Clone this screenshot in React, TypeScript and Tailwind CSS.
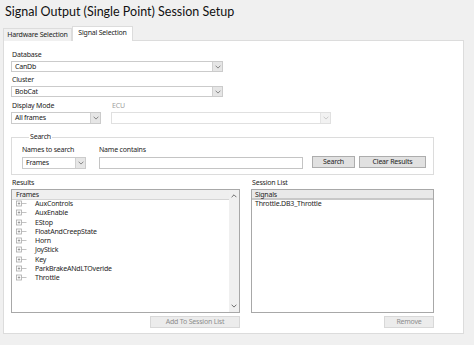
import React from "react";

const Chevron = ({ c = "#7a7a7a" }: { c?: string }) => (
  <svg width="6" height="4" viewBox="0 0 6 4">
    <path d="M0.6 0.7 L3 3.1 L5.4 0.7" fill="none" stroke={c} strokeWidth="0.9" />
  </svg>
);

const Up = () => (
  <svg width="6" height="4" viewBox="0 0 6 4">
    <path d="M0.6 3.2 L3 0.8 L5.4 3.2" fill="none" stroke="#606060" strokeWidth="0.9" />
  </svg>
);

function Combo({ value, cls, disabled }: { value?: string; cls: string; disabled?: boolean }) {
  return (
    <div className={cls}>
      <div className="flex-1 pl-[3px] leading-[10px] text-[7px] text-[#1a1a1a]">{value}</div>
      <div
        className={
          disabled
            ? "flex w-[10px] items-center justify-center border-l border-[#e4e4e4] bg-[#f2f2f2]"
            : "flex w-[10px] items-center justify-center border-l border-[#d0d0d0] bg-[#e6e6e6]"
        }
      >
        <Chevron c={disabled ? "#c4c4c4" : "#7a7a7a"} />
      </div>
    </div>
  );
}

const TreePlus = () => (
  <svg width="11" height="7" viewBox="0 0 11 7" className="shrink-0">
    <rect x="0.5" y="1" width="5" height="5" fill="none" stroke="#a8a8a8" strokeWidth="0.8" />
    <path d="M1.8 3.5 H4.2 M3 2.3 V4.7" stroke="#8a8a8a" strokeWidth="0.8" />
    <path d="M5.5 3.5 H10.5" stroke="#b4b4b4" strokeWidth="0.8" />
  </svg>
);

const frames = [
  "AuxControls",
  "AuxEnable",
  "EStop",
  "FloatAndCreepState",
  "Horn",
  "JoyStick",
  "Key",
  "ParkBrakeANdLTOveride",
  "Throttle",
];

export default function App() {
  return (
    <div
      className="flex h-[345px] w-[474px] flex-col bg-[#f0f0f0] tracking-[-0.2px] text-[#1e1e1e]"
      style={{ fontFamily: '"Noto Sans", "Open Sans", sans-serif' }}
    >
      <div
        className="h-[26px] pl-[5px] pt-[3px] text-[12.5px] leading-[18px] tracking-normal text-[#111]"
        style={{ fontFamily: 'Lato, "Noto Sans", sans-serif' }}
      >
        Signal Output (Single Point) Session Setup
      </div>
      <div className="relative z-10 -mb-px flex h-[15px] items-end pl-[3px]">
        <div className="flex h-[13px] w-[69px] items-center justify-center border border-b-0 border-[#dcdcdc] bg-[#f0f0f0] text-[7px] text-[#222]">
          Hardware Selection
        </div>
        <div className="flex h-[15px] w-[61px] items-center justify-center border border-b-0 border-[#dcdcdc] bg-white pb-[1px] text-[7px] text-[#222]">
          Signal Selection
        </div>
      </div>
      <div className="ml-[3px] flex w-[461px] flex-col border border-[#dcdcdc] bg-white pb-[5px] pl-[7px] pt-[9px]">
        <div className="h-[10px] pl-[1px] text-[7px] leading-[10px]">Database</div>
        <Combo value="CanDb" cls="mt-[1px] flex h-[11px] w-[212px] border border-[#cbcbcb] bg-white" />
        <div className="mt-[3px] h-[10px] pl-[1px] text-[7px] leading-[10px]">Cluster</div>
        <Combo value="BobCat" cls="mt-[1px] flex h-[11px] w-[212px] border border-[#cbcbcb] bg-white" />
        <div className="mt-[4px] flex gap-[10px]">
          <div className="flex w-[90px] flex-col">
            <div className="h-[10px] pl-[1px] text-[7px] leading-[10px]">Display Mode</div>
            <Combo value="All frames" cls="mt-[1px] flex h-[12px] w-[90px] border border-[#cbcbcb] bg-white" />
          </div>
          <div className="flex w-[220px] flex-col">
            <div className="h-[10px] pl-[1px] text-[7px] leading-[10px] text-[#a0a0a0]">ECU</div>
            <Combo disabled cls="mt-[1px] flex h-[12px] w-[220px] border border-[#e0e0e0] bg-white" />
          </div>
        </div>
        <fieldset className="mt-[8px] w-[423px] border border-[#dcdcdc] pb-[5px] pl-[10px]">
          <legend className="ml-[7px] px-[1px] text-[7px] leading-[10px]">Search</legend>
          <div className="mt-[3px] flex items-end">
            <div className="flex w-[64px] flex-col">
              <div className="h-[10px] text-[7px] leading-[10px]">Names to search</div>
              <Combo value="Frames" cls="mt-[2px] flex h-[12px] w-[64px] border border-[#cbcbcb] bg-white" />
            </div>
            <div className="ml-[13px] flex w-[204px] flex-col">
              <div className="h-[10px] text-[7px] leading-[10px]">Name contains</div>
              <div className="mt-[2px] h-[12px] w-[204px] border border-[#c4c4c4] bg-white" />
            </div>
            <div className="mb-[1px] ml-[9px] flex h-[12px] w-[43px] items-center justify-center border border-[#adadad] bg-[#e1e1e1] text-[7px]">
              Search
            </div>
            <div className="mb-[1px] ml-[4px] flex h-[12px] w-[67px] items-center justify-center border border-[#adadad] bg-[#e1e1e1] text-[7px]">
              Clear Results
            </div>
          </div>
        </fieldset>
        <div className="mt-[3px] flex gap-[11px]">
          <div className="flex w-[229px] flex-col">
            <div className="h-[10px] pl-[1px] text-[7px] leading-[10px]">Results</div>
            <div className="mt-[1px] flex h-[124px] border border-[#a8a8a8] bg-white">
              <div className="flex flex-1 flex-col">
                <div className="h-[10px] border-b border-[#d5d5d5] bg-[#efefef] pl-[4px] text-[7px] leading-[9px]">
                  Frames
                </div>
                <div className="-mt-[1px] flex flex-col">
                  {frames.map((f) => (
                    <div key={f} className="flex h-[9.25px] items-center pl-[4px]">
                      <TreePlus />
                      <span className="ml-[8px] text-[7px] leading-[9px]">{f}</span>
                    </div>
                  ))}
                </div>
              </div>
              <div className="flex w-[10px] flex-col items-center justify-between bg-[#f0f0f0] py-[4px]">
                <Up />
                <Chevron c="#606060" />
              </div>
            </div>
            <div className="mt-[3px] flex justify-end">
              <div className="flex h-[12px] w-[90px] items-center justify-center border border-[#d8d8d8] bg-[#ececec] text-[7px] text-[#8d8d8d]">
                Add To Session List
              </div>
            </div>
          </div>
          <div className="flex w-[183px] flex-col">
            <div className="h-[10px] pl-[1px] text-[7px] leading-[10px]">Session List</div>
            <div className="mt-[1px] flex h-[124px] flex-col border border-[#a8a8a8] bg-white">
              <div className="h-[10px] border-b-2 border-[#c8c8c8] bg-[#e9e9e9] pl-[3px] text-[7px] leading-[9px]">
                Signals
              </div>
              <div className="-mt-[1px] pl-[3px] text-[7px] leading-[9px]">Throttle.DB3_Throttle</div>
            </div>
            <div className="mt-[3px] flex justify-end">
              <div className="flex h-[12px] w-[50px] items-center justify-center border border-[#d8d8d8] bg-[#ececec] text-[7px] text-[#8d8d8d]">
                Remove
              </div>
            </div>
          </div>
        </div>
      </div>
    </div>
  );
}
